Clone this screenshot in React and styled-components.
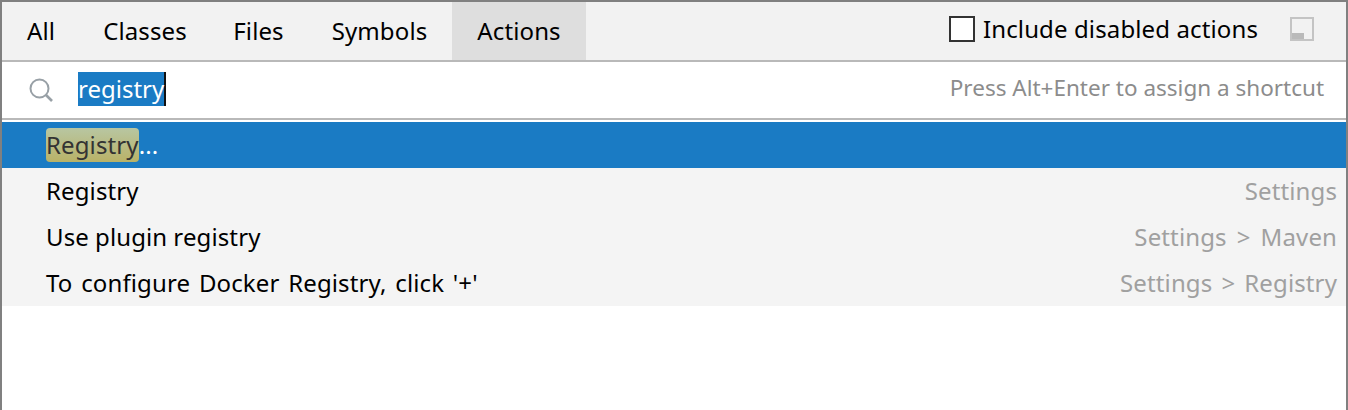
import React from "react";
import styled, { createGlobalStyle } from "styled-components";

const Global = createGlobalStyle`
  html, body { margin: 0; padding: 0; background: #fff; }
  body { font-family: "Noto Sans", "Open Sans", sans-serif; }
`;

const Frame = styled.div`
  box-sizing: border-box;
  width: 1348px;
  height: 410px;
  overflow: hidden;
  border: 2px solid #808080;
  border-bottom: none;
  background: #fff;
  font-size: 24px;
  letter-spacing: 0.12px;
`;

const Toolbar = styled.div`
  display: flex;
  align-items: stretch;
  height: 58px;
  background: #f2f2f2;
  border-bottom: 2px solid #b9b9b9;
`;

const Tab = styled.div`
  display: flex;
  align-items: center;
  justify-content: center;
  box-sizing: border-box;
  padding-bottom: 2px;
  width: ${(p) => p.$w}px;
  color: #000;
  background: ${(p) => (p.$active ? "#dedede" : "transparent")};
`;

const Tools = styled.div`
  margin-left: auto;
  display: flex;
  align-items: center;
  padding-right: 32px;
  padding-bottom: 4px;
`;

const Box = styled.span`
  box-sizing: border-box;
  width: 26px;
  height: 26px;
  border: 2px solid #333;
  background: #fff;
  margin-right: 8px;
`;

const Label = styled.span`
  margin-right: 32px;
  padding-bottom: 2px;
`;

const SearchRow = styled.div`
  display: flex;
  align-items: center;
  height: 56px;
  border-bottom: 2px solid #b9b9b9;
  padding: 0 22px 0 26px;
`;

const Query = styled.span`
  display: flex;
  align-items: center;
  box-sizing: border-box;
  height: 34px;
  margin: 0 0 2px 24px;
  padding-bottom: 2px;
  background: #1a7bc4;
  color: #fff;
  border-right: 2px solid #111;
  letter-spacing: 0;
`;

const Hint = styled.span`
  margin-left: auto;
  padding-bottom: 6px;
  color: #8c8c8c;
  font-size: 22.5px;
  letter-spacing: 0;
`;

const Results = styled.div`
  margin-top: 2px;
`;

const Row = styled.div`
  display: flex;
  align-items: center;
  justify-content: space-between;
  box-sizing: border-box;
  height: 46px;
  padding: 0 9px ${(p) => (p.$selected ? "0" : "2px")} 44px;
  background: ${(p) => (p.$selected ? "#1a7bc4" : "#f4f4f4")};
  color: ${(p) => (p.$selected ? "#fff" : "#000")};
`;

const Name = styled.span`
  word-spacing: ${(p) => p.$gap}px;
`;

const Match = styled.span`
  display: inline-block;
  line-height: 34px;
  border-radius: 4px;
  background: linear-gradient(#b8c6a2, #b9b267);
  color: #333;
`;

const Path = styled.span`
  color: #a0a0a0;
  word-spacing: ${(p) => p.$gap}px;
`;

const SearchIcon = () => (
  <svg width="26" height="26" viewBox="0 0 26 26" fill="none" stroke="#98a0a6" strokeWidth="2">
    <circle cx="11.5" cy="11.5" r="9" />
    <path d="M18 18l6 6" strokeWidth="2.6" />
  </svg>
);

const PinIcon = () => (
  <svg width="24" height="24" viewBox="0 0 24 24">
    <rect x="1" y="1" width="22" height="22" fill="none" stroke="#c4c4c4" strokeWidth="2" />
    <rect x="2" y="16" width="12" height="6" fill="#bababa" />
  </svg>
);

const rows = [
  { name: "Registry", path: "Settings", nameGap: 0, pathGap: 0 },
  { name: "Use plugin registry", path: "Settings > Maven", nameGap: -0.3, pathGap: 3.7 },
  { name: "To configure Docker Registry, click '+'", path: "Settings > Registry", nameGap: 2.4, pathGap: 2.7 },
];

export default function App() {
  return (
    <Frame>
      <Global />
      <Toolbar>
        <Tab $w={78}>All</Tab>
        <Tab $w={130}>Classes</Tab>
        <Tab $w={97}>Files</Tab>
        <Tab $w={145}>Symbols</Tab>
        <Tab $w={134} $active>Actions</Tab>
        <Tools>
          <Box />
          <Label>Include disabled actions</Label>
          <PinIcon />
        </Tools>
      </Toolbar>
      <SearchRow>
        <SearchIcon />
        <Query>registry</Query>
        <Hint>Press Alt+Enter to assign a shortcut</Hint>
      </SearchRow>
      <Results>
        <Row $selected>
          <span>
            <Match>Registry</Match>...
          </span>
        </Row>
        {rows.map((r) => (
          <Row key={r.name}>
            <Name $gap={r.nameGap}>{r.name}</Name>
            <Path $gap={r.pathGap}>{r.path}</Path>
          </Row>
        ))}
      </Results>
    </Frame>
  );
}
